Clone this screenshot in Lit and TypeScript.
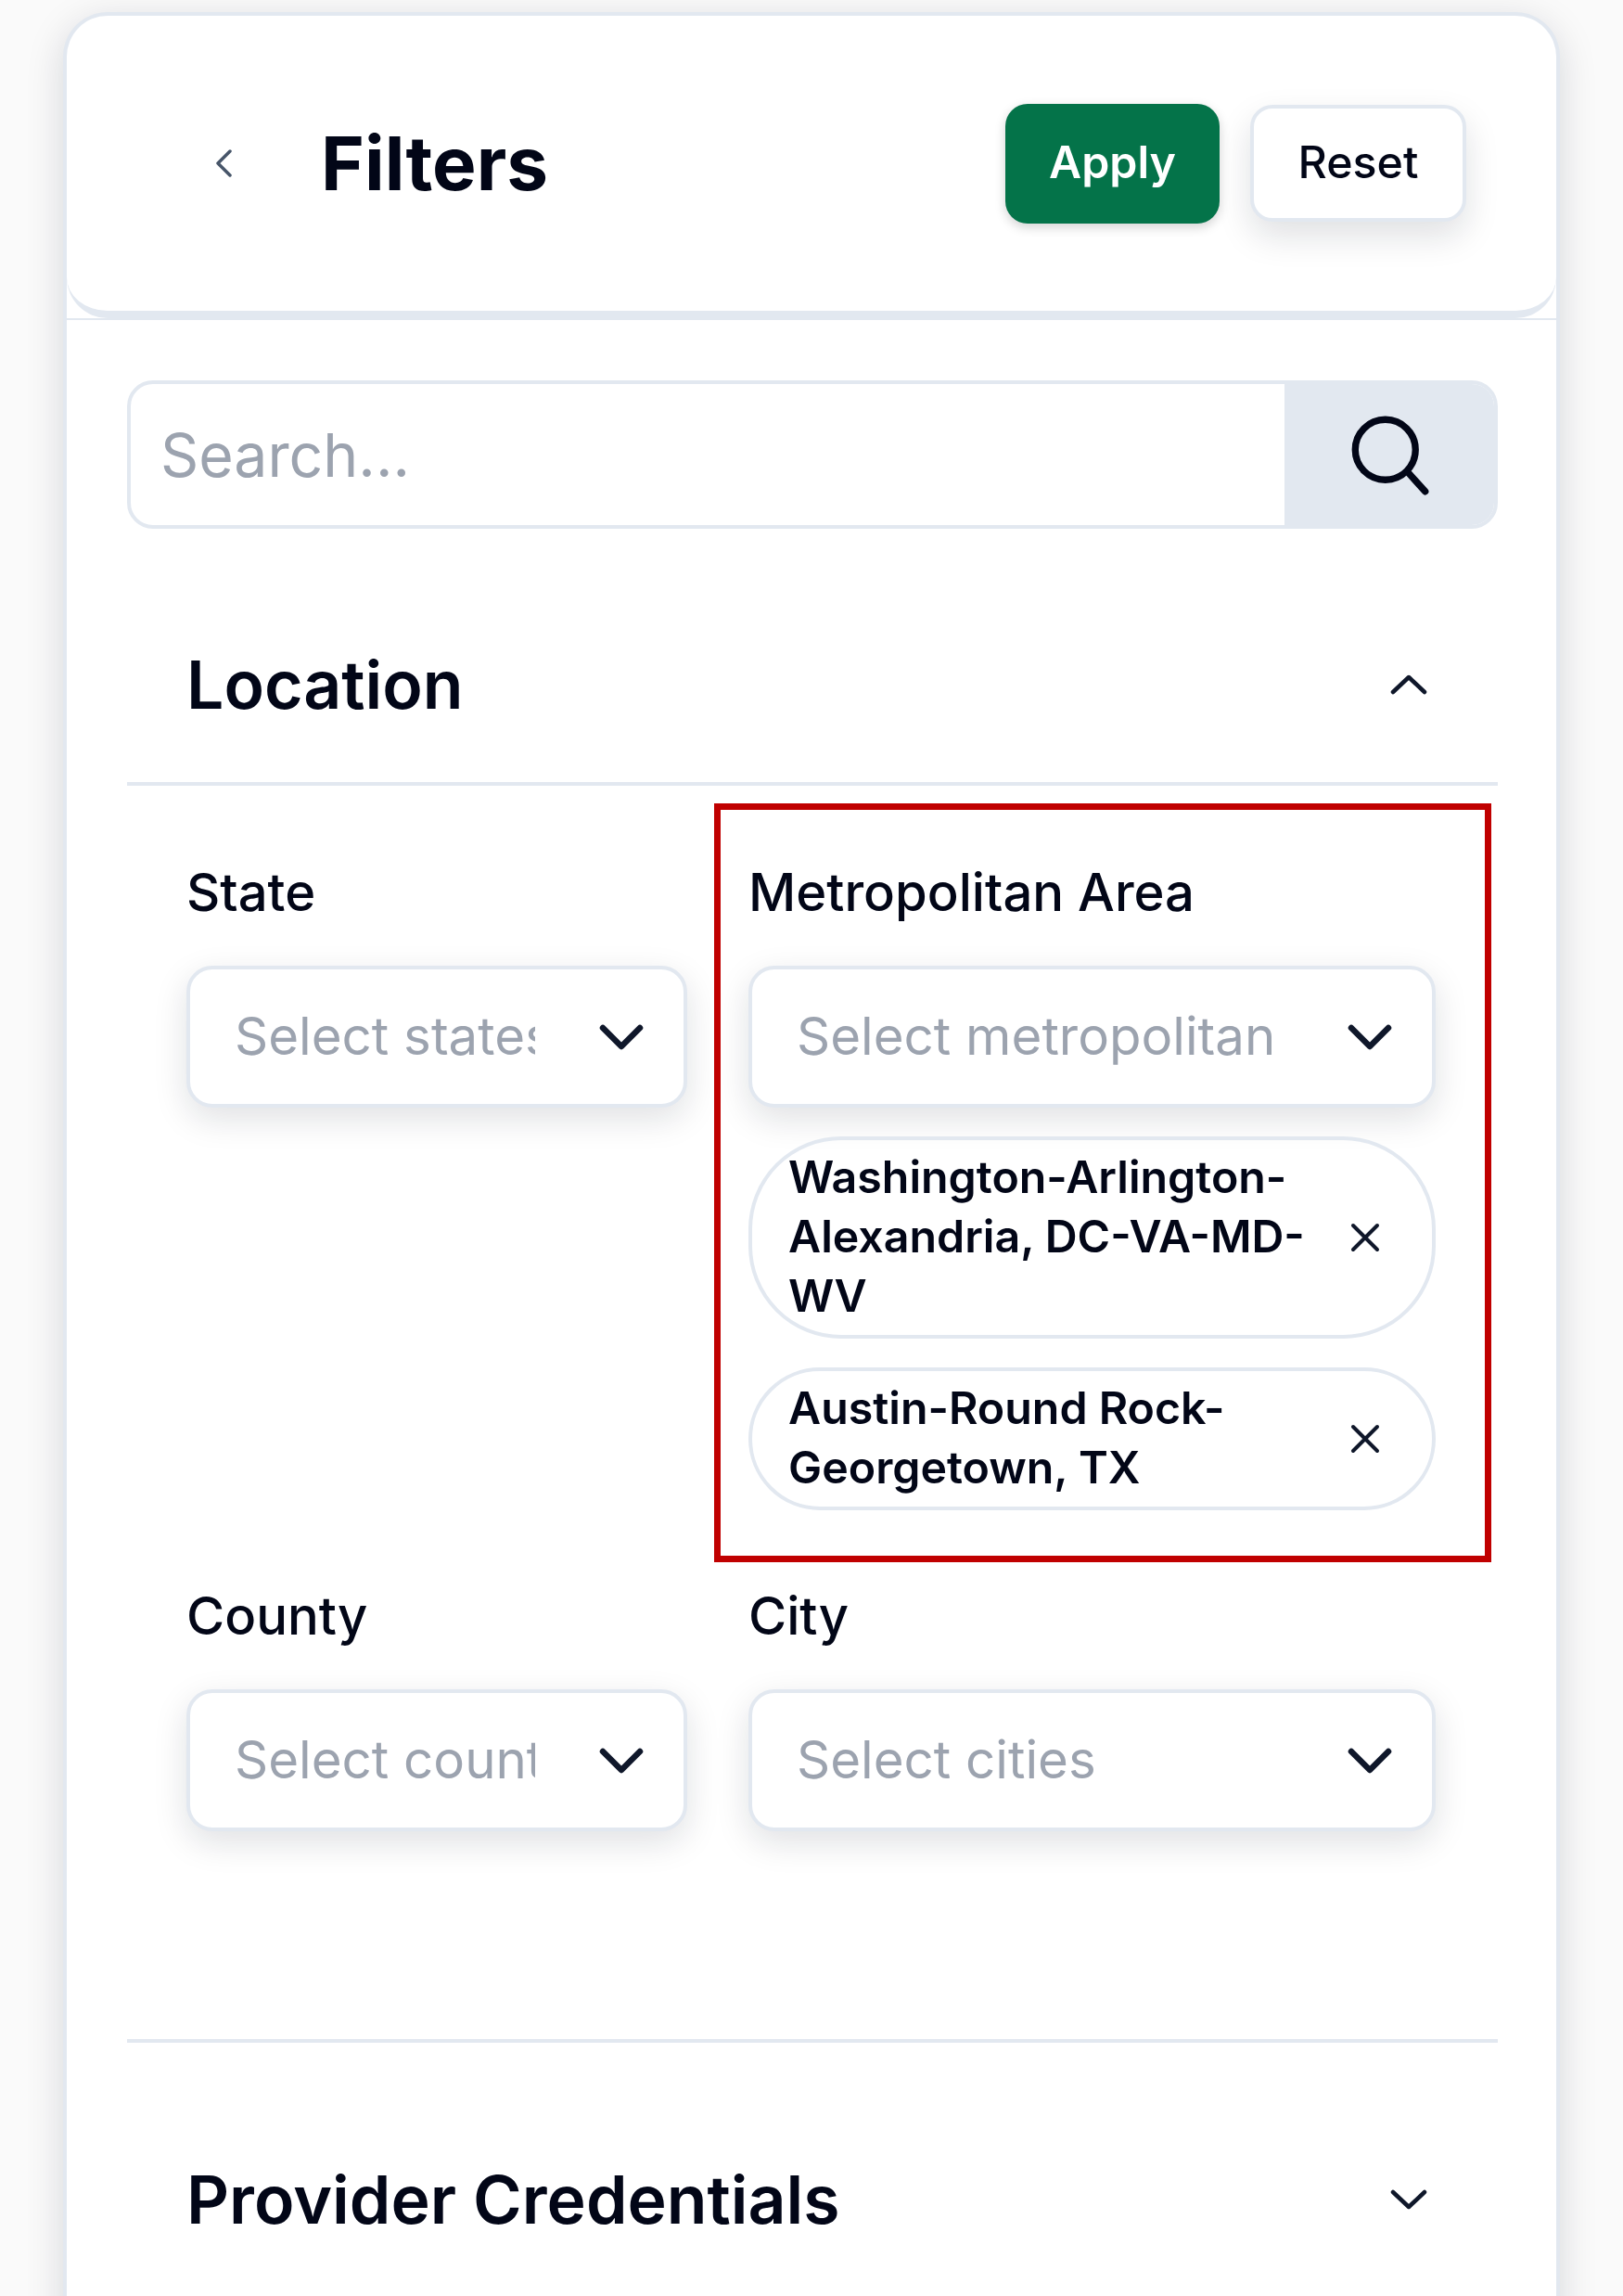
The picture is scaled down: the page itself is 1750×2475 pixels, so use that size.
import { LitElement, html, css } from "lit";
import { customElement } from "lit/decorators.js";

const chevDown = html`<svg class="chev" viewBox="0 0 48 30" fill="none" stroke="#0f172a" stroke-width="6.5" stroke-linecap="round" stroke-linejoin="round"><path d="M4 5 L24 25 L44 5"/></svg>`;
const xIcon = html`<svg class="x" viewBox="0 0 32 32" fill="none" stroke="#0f172a" stroke-width="4" stroke-linecap="round"><path d="M3 3 L29 29 M29 3 L3 29"/></svg>`;

@customElement("app-root")
export class AppRoot extends LitElement {
  static styles = css`
    :host { display: block; width: 1750px; height: 2475px; overflow: hidden; background: #fafafa; font-family: Inter, "Liberation Sans", sans-serif; color: #020617; }
    .page { padding: 13px 68px 0 68px; }
    .card { background: #fff; border: 4px solid #e2e8f0; border-bottom: 0; border-radius: 48px 48px 0 0; box-shadow: 0 10px 40px rgba(15,23,42,.15); height: 2600px; box-sizing: border-box; }
    .hdr { display: flex; align-items: center; height: 326px; box-sizing: border-box; padding: 0 97px 0 160px; border-bottom: 8px solid #e2e8f0; border-radius: 0 0 44px 44px; }
    .rule-top { height: 2px; background: #e2e8f0; }
    .back { width: 18px; height: 30px; margin-right: 96px; flex: none; }
    h1 { margin: 0; font-size: 80px; font-weight: 750; line-height: 1; flex: 1; }
    .btn { box-sizing: border-box; display: flex; align-items: center; justify-content: center; width: 231px; height: 129px; padding-bottom: 3px; border-radius: 24px; font-size: 48.3px; font-weight: 600; background: #047349; color: #fff; box-shadow: 0 4px 12px rgba(0,0,0,.18); }
    .btn.reset { width: 233px; height: 126px; margin-left: 33px; background: #fff; color: #020617; border: 4px solid #e2e8f0; font-weight: 500; box-shadow: 0 16px 36px rgba(15,23,42,.13); }
    .body { padding: 65px 63px 0 65px; }
    .search { display: flex; height: 160px; box-sizing: border-box; border: 4px solid #e2e8f0; border-radius: 28px; overflow: hidden; }
    .search .ph { flex: 1; display: flex; align-items: center; padding: 2px 0 0 32px; font-size: 64.3px; color: #9ca3af; }
    .search .go { width: 230px; background: #e2e8f0; display: flex; align-items: center; justify-content: center; margin: -4px -4px -4px 0; }
    .search svg { width: 88px; height: 88px; margin-right: 3px; }
    .loc { height: 277px; box-sizing: border-box; padding-top: 62px; border-bottom: 4px solid #e2e8f0; }
    .loc-inner { height: 211px; display: flex; align-items: center; justify-content: space-between; padding: 0 76px 0 64px; font-size: 71.5px; font-weight: 560; }
    .grid { position: relative; display: grid; grid-template-columns: 540px 741px; column-gap: 66px; padding: 0 0 0 64px; }
    .col { padding-top: 83px; }
    .col.row2 { padding-top: 82px; }
    .label { font-size: 56.2px; font-weight: 540; line-height: 64px; margin-bottom: 47px; }
    .dd { box-sizing: border-box; height: 153px; display: flex; align-items: center; background: #fff; border: 4px solid #e2e8f0; border-radius: 28px; box-shadow: 0 12px 36px rgba(15,23,42,.13); padding-left: 48px; }
    .dd .ph { font-size: 56.4px; color: #9ca3af; white-space: nowrap; overflow: hidden; flex: none; margin-bottom: 3px; }
    .dd .spacer { flex: 1; }
    .chev { width: 48px; height: 30px; flex: none; margin-right: 43px; }
    .chip { box-sizing: border-box; display: flex; align-items: center; border: 4px solid #e2e8f0; border-radius: 100px; padding: 0 56px 0 39px; font-size: 48.3px; font-weight: 600; line-height: 64px; margin-top: 31px; }
    .chip span { flex: 1; margin-bottom: 3px; }
    .x { width: 32px; height: 32px; flex: none; }
    .redbox { position: absolute; left: 633px; top: 19px; width: 838px; height: 818px; box-sizing: border-box; border: 7px solid #c00000; pointer-events: none; }
    .rule { height: 4px; background: #e2e8f0; margin-top: 224px; }
    .pc { height: 338px; display: flex; align-items: center; justify-content: space-between; padding: 0 76px 0 64px; font-size: 71.5px; font-weight: 560; }
  `;

  dd(text: string, w: number) {
    return html`<div class="dd"><div class="ph" style="width:${w}px">${text}</div><div class="spacer"></div>${chevDown}</div>`;
  }

  render() {
    return html`<div class="page"><div class="card">
      <div class="hdr">
        <svg class="back" viewBox="0 0 18 30" fill="none" stroke="#475569" stroke-width="3.5" stroke-linecap="round" stroke-linejoin="round"><path d="M16 2 L3 15 L16 28"/></svg>
        <h1>Filters</h1>
        <div class="btn">Apply</div>
        <div class="btn reset">Reset</div>
      </div>
      <div class="rule-top"></div>
      <div class="body">
        <div class="search">
          <div class="ph">Search...</div>
          <div class="go"><svg viewBox="0 0 84 84" fill="none" stroke="#020617" stroke-width="7" stroke-linecap="round"><circle cx="37" cy="37" r="31"/><path d="M60 60 L78 80"/></svg></div>
        </div>
        <div class="loc"><div class="loc-inner"><span>Location</span><svg width="40" height="22" viewBox="0 0 40 22" fill="none" stroke="#0f172a" stroke-width="4.5" stroke-linecap="round" stroke-linejoin="round"><path d="M3 19 L20 3 L37 19"/></svg></div></div>
        <div class="grid">
          <div class="col"><div class="label">State</div>${this.dd("Select states", 324)}</div>
          <div class="col"><div class="label">Metropolitan Area</div>${this.dd("Select metropolitan", 550)}
            <div class="chip" style="height:218px"><span>Washington-Arlington-<br>Alexandria, DC-VA-MD-<br>WV</span>${xIcon}</div>
            <div class="chip" style="height:154px"><span>Austin-Round Rock-<br>Georgetown, TX</span>${xIcon}</div>
          </div>
          <div class="col row2"><div class="label">County</div>${this.dd("Select counties", 324)}</div>
          <div class="col row2"><div class="label">City</div>${this.dd("Select cities", 550)}</div>
          <div class="redbox"></div>
        </div>
        <div class="rule"></div>
        <div class="pc"><span>Provider Credentials</span><svg width="40" height="22" viewBox="0 0 40 22" fill="none" stroke="#0f172a" stroke-width="4.5" stroke-linecap="round" stroke-linejoin="round"><path d="M3 3 L20 19 L37 3"/></svg></div>
      </div>
    </div></div>`;
  }
}
